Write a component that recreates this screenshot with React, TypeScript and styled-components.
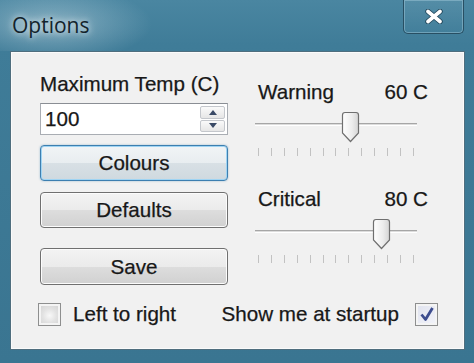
import React from 'react';
import styled, { createGlobalStyle } from 'styled-components';

const GlobalStyle = createGlobalStyle`
  html, body {
    margin: 0;
    padding: 0;
    background: #3a7591;
  }
  body {
    font-family: 'Liberation Sans', Arial, sans-serif;
  }
`;

const Window = styled.div`
  width: 474px;
  height: 363px;
  display: flex;
  flex-direction: column;
  background: linear-gradient(180deg, #4a86a1 0%, #3f7c98 45px, #3a7591 100%);
  box-sizing: border-box;
  overflow: hidden;
`;

const TitleBar = styled.div`
  height: 51px;
  flex: none;
  display: flex;
  justify-content: space-between;
  align-items: flex-start;
  padding: 0 10px 0 12px;
  background: radial-gradient(ellipse 100px 38px at 52px 24px, rgba(235, 245, 250, 0.38), rgba(235, 245, 250, 0) 100%);
`;

const Title = styled.div`
  margin-top: 11px;
  font-family: 'Open Sans', 'Liberation Sans', sans-serif;
  font-size: 21px;
  line-height: 28px;
  color: #13232c;
  text-shadow: 0 0 6px rgba(255, 255, 255, 0.8), 0 0 12px rgba(255, 255, 255, 0.5);
`;

const CloseButton = styled.div`
  width: 61px;
  height: 34px;
  box-sizing: border-box;
  display: flex;
  align-items: center;
  justify-content: center;
  border: 1px solid #284f63;
  border-top: none;
  border-radius: 0 0 5px 5px;
  box-shadow: inset 0 0 0 1px rgba(180, 215, 230, 0.4);
  background: linear-gradient(180deg, rgba(255, 255, 255, 0.06), rgba(255, 255, 255, 0));
`;

const Panel = styled.div`
  height: 299px;
  flex: none;
  margin: 0 9px 0 10px;
  box-sizing: border-box;
  border: 1px solid #4f6e7e;
  background: #f1f1f1;
  box-shadow: inset 0 0 0 1px #fbfbfb;
  padding-top: 20px;
  display: flex;
  flex-direction: column;
  color: #181818;
  font-size: 20.6px;
  -webkit-text-stroke: 0.25px #181818;
`;

const Columns = styled.div`
  display: flex;
  padding-left: 29px;
  gap: 27px;
`;

const LeftColumn = styled.div`
  width: 188px;
  display: flex;
  flex-direction: column;
`;

const RightColumn = styled.div`
  width: 173px;
  display: flex;
  flex-direction: column;
  padding-top: 8px;
`;

const Label = styled.div`
  line-height: 24px;
  white-space: nowrap;
`;

const SpinBox = styled.div`
  margin-top: 7px;
  height: 32px;
  box-sizing: border-box;
  display: flex;
  align-items: stretch;
  border: 1px solid #a9adb3;
  border-top-color: #8a8e94;
  background: #fff;
  padding: 2px;
`;

const SpinInput = styled.input`
  flex: 1;
  min-width: 0;
  border: none;
  outline: none;
  padding: 0 0 0 2px;
  font: inherit;
  font-size: 20.6px;
  color: #181818;
  background: transparent;
`;

const SpinButtons = styled.div`
  width: 25px;
  display: flex;
  flex-direction: column;
  gap: 1px;
`;

const SpinButton = styled.div`
  flex: 1;
  display: flex;
  align-items: center;
  justify-content: center;
  border: 1px solid #c4c7cc;
  border-radius: 2px;
  background: linear-gradient(180deg, #fafafa, #e6e6e6);
`;

const Button = styled.div<{ $focused?: boolean; $gap: number; $height: number }>`
  margin-top: ${p => p.$gap}px;
  height: ${p => p.$height}px;
  box-sizing: border-box;
  display: flex;
  align-items: center;
  justify-content: center;
  border-radius: 4px;
  border: 1px solid ${p => (p.$focused ? '#3d7fb0' : '#707070')};
  box-shadow: ${p =>
    p.$focused
      ? 'inset 0 0 0 1px #9fd4f3, 0 0 2px rgba(60, 127, 177, 0.5)'
      : 'inset 0 0 0 1px #fcfcfc'};
  background: ${p =>
    p.$focused
      ? 'linear-gradient(180deg, #f1f4f6 0%, #e8edf0 50%, #d8e0e5 51%, #cfd9df 100%)'
      : 'linear-gradient(180deg, #f3f3f3 0%, #ebebeb 50%, #dddddd 51%, #d1d1d1 100%)'};
`;

const SliderHeader = styled.div<{ $gap: number }>`
  margin-top: ${p => p.$gap}px;
  display: flex;
  justify-content: space-between;
  padding-left: 3px;
  line-height: 24px;
`;

const TrackArea = styled.div`
  position: relative;
  height: 36px;
  margin-top: 4px;
  width: 162px;
`;

const Track = styled.div`
  margin-top: 15px;
  height: 3px;
  box-sizing: border-box;
  border-top: 1px solid #a6a6a6;
  border-bottom: 1px solid #ffffff;
  background: #dcdcdc;
`;

const Thumb = styled.svg`
  position: absolute;
  top: 3px;
  width: 19px;
  height: 32px;
`;

const Ticks = styled.div`
  width: 162px;
  margin-top: 4px;
  height: 8px;
  display: flex;
  justify-content: space-between;
  padding: 0 3px;
  box-sizing: border-box;
`;

const Tick = styled.span`
  width: 1px;
  height: 8px;
  background: #c2c2c2;
`;

const BottomRow = styled.div`
  margin-top: 17px;
  display: flex;
  align-items: center;
  padding: 0 26px 0 27px;
`;

const CheckGroup = styled.div<{ $right?: boolean }>`
  display: flex;
  align-items: center;
  gap: ${p => (p.$right ? 16 : 12)}px;
  margin-left: ${p => (p.$right ? 'auto' : '0')};
  line-height: 24px;
`;

const Box = styled.div<{ $checked?: boolean }>`
  width: 23px;
  height: 23px;
  box-sizing: border-box;
  border: 1px solid #8e8f8f;
  display: flex;
  align-items: center;
  justify-content: center;
  background: ${p =>
    p.$checked
      ? 'linear-gradient(135deg, #dfe2ee, #f3f4fa)'
      : 'radial-gradient(circle at 50% 55%, #f8f8f8 0%, #e2e2e2 45%, #cfcfcf 100%)'};
  box-shadow: inset 0 0 0 2px #f4f4f4;
`;

const MIN = 0;
const MAX = 100;
const TRACK_W = 162;
const THUMB_W = 19;

function Slider({ label, value }: { label: string; value: number }) {
  const left = 3 + ((value - MIN) / (MAX - MIN)) * (TRACK_W - 6) - THUMB_W / 2 - 1;
  return (
    <>
      <TrackArea>
        <Track />
        <Thumb viewBox="0 0 19 32" style={{ left }}>
          <defs>
            <linearGradient id={`thumb-${label}`} x1="0" y1="0" x2="1" y2="0">
              <stop offset="0" stopColor="#ffffff" />
              <stop offset="0.6" stopColor="#ececec" />
              <stop offset="1" stopColor="#d4d4d4" />
            </linearGradient>
          </defs>
          <path
            d="M1.5 4 Q1.5 1.5 4 1.5 H15 Q17.5 1.5 17.5 4 V22 L9.5 30.5 L1.5 22 Z"
            fill={`url(#thumb-${label})`}
            stroke="#6f6f6f"
            strokeWidth="1.2"
          />
        </Thumb>
      </TrackArea>
      <Ticks>
        {Array.from({ length: 13 }).map((_, i) => (
          <Tick key={i} />
        ))}
      </Ticks>
    </>
  );
}

export default function App() {
  return (
    <Window>
      <GlobalStyle />
      <TitleBar>
        <Title>Options</Title>
        <CloseButton>
          <svg width="18" height="15" viewBox="0 0 18 15">
            <path d="M3 2.5 L15 12.5 M15 2.5 L3 12.5" stroke="#21465a" strokeWidth="5.4" strokeLinecap="round" />
            <path d="M3 2.5 L15 12.5 M15 2.5 L3 12.5" stroke="#ffffff" strokeWidth="3.6" strokeLinecap="round" />
          </svg>
        </CloseButton>
      </TitleBar>

      <Panel>
        <Columns>
          <LeftColumn>
            <Label>Maximum Temp (C)</Label>
            <SpinBox>
              <SpinInput value="100" readOnly />
              <SpinButtons>
                <SpinButton>
                  <svg width="8" height="5" viewBox="0 0 8 5">
                    <path d="M0 5 L4 0 L8 5 Z" fill="#3a4a66" />
                  </svg>
                </SpinButton>
                <SpinButton>
                  <svg width="8" height="5" viewBox="0 0 8 5">
                    <path d="M0 0 L4 5 L8 0 Z" fill="#3a4a66" />
                  </svg>
                </SpinButton>
              </SpinButtons>
            </SpinBox>
            <Button $focused $gap={10} $height={36}>Colours</Button>
            <Button $gap={11} $height={36}>Defaults</Button>
            <Button $gap={20} $height={37}>Save</Button>
          </LeftColumn>

          <RightColumn>
            <SliderHeader $gap={0}>
              <span>Warning</span>
              <span>60 C</span>
            </SliderHeader>
            <Slider label="warning" value={60} />
            <SliderHeader $gap={31}>
              <span>Critical</span>
              <span>80 C</span>
            </SliderHeader>
            <Slider label="critical" value={80} />
          </RightColumn>
        </Columns>

        <BottomRow>
          <CheckGroup>
            <Box />
            <span>Left to right</span>
          </CheckGroup>
          <CheckGroup $right>
            <span>Show me at startup</span>
            <Box $checked>
              <svg width="16" height="16" viewBox="0 0 16 16">
                <path d="M2.5 8.5 L6.5 13.5 L13.5 2" fill="none" stroke="#3d4d8f" strokeWidth="2.8" strokeLinejoin="round" />
              </svg>
            </Box>
          </CheckGroup>
        </BottomRow>
      </Panel>
    </Window>
  );
}
